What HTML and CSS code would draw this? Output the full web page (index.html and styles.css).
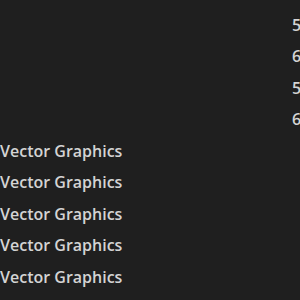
FILE: index.html
```html
<!DOCTYPE html>
<html>
<head>
<meta charset="utf-8">
<link rel="stylesheet" href="styles.css">
</head>
<body>
<div class="list">
  <div class="row"><span class="name"></span><span class="num">5</span></div>
  <div class="row"><span class="name"></span><span class="num">6</span></div>
  <div class="row"><span class="name"></span><span class="num">5</span></div>
  <div class="row"><span class="name"></span><span class="num">6</span></div>
  <div class="row"><span class="name">Vector Graphics</span><span class="num"></span></div>
  <div class="row"><span class="name">Vector Graphics</span><span class="num"></span></div>
  <div class="row"><span class="name">Vector Graphics</span><span class="num"></span></div>
  <div class="row"><span class="name">Vector Graphics</span><span class="num"></span></div>
  <div class="row"><span class="name">Vector Graphics</span><span class="num"></span></div>
</div>
</body>
</html>
```
FILE: styles.css
```css
html, body {
  margin: 0;
  padding: 0;
  background: #1f1f1f;
  overflow: hidden;
  width: 300px;
  height: 300px;
}
.list {
  padding-top: 9px;
  width: 300px;
  overflow: hidden;
  font-family: "Open Sans", "Noto Sans", sans-serif;
  font-size: 16px;
  font-weight: 600;
  color: #d4d4d4;
}
.row {
  display: grid;
  grid-template-columns: 292px 8px;
  height: 31.5px;
  align-items: center;
}
.name {
  white-space: nowrap;
}
.num {
  white-space: nowrap;
  overflow: hidden;
}
```
